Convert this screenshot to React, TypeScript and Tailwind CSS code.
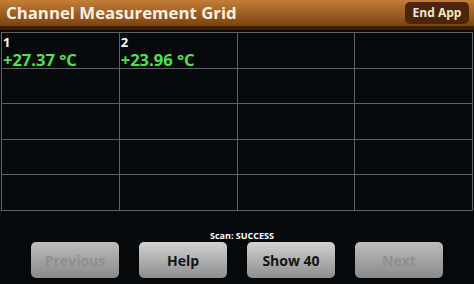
import React from "react";

const cells = Array.from({ length: 20 }, (_, i) => i);
const values: Record<number, string> = { 0: "+27.37 °C", 1: "+23.96 °C" };

function Btn({ label, disabled }: { label: string; disabled?: boolean }) {
  return (
    <button
      className={
        disabled
          ? "w-[88px] h-[36px] rounded-[5px] bg-gradient-to-b from-[#bdbdbd] to-[#8a8a8a] text-[14px] font-bold text-[#8f8f8f]"
          : "w-[88px] h-[36px] rounded-[5px] bg-gradient-to-b from-[#d2d2d2] to-[#8e8e8e] text-[14px] font-bold text-[#141414]"
      }
    >
      {label}
    </button>
  );
}

export default function App() {
  return (
    <div className="w-[474px] h-[284px] bg-[#05090c] flex flex-col font-['Open_Sans',sans-serif] overflow-hidden">
      {/* Header */}
      <div className="h-[30px] flex items-start justify-between bg-gradient-to-b from-[#c47e36] to-[#7a4313] border-b-[4px] border-[#3a1f08]">
        <div className="pl-[6px] pt-[1px] text-[16.8px] font-bold text-[#f7efe4] leading-[24px]">Channel Measurement Grid</div>
        <div className="mt-[2px] mr-[5px] w-[64px] h-[22px] rounded-[5px] bg-[#4a260b] text-[12px] font-bold text-[#f3e6cf] flex items-center justify-center">
          End App
        </div>
      </div>

      {/* Grid */}
      <div className="mt-[2px] mx-[1px] grid grid-cols-4 grid-rows-5 h-[179px] border-t border-l border-[#5d6266]">
        {cells.map((i) => (
          <div key={i} className="border-r border-b border-[#5d6266] pl-[1px] pt-[1px]">
            {values[i] && (
              <>
                <div className="text-[13px] font-bold text-white leading-[16px]">{i + 1}</div>
                <div className="text-[16.5px] font-bold text-[#4ee24e] leading-[19px]">{values[i]}</div>
              </>
            )}
          </div>
        ))}
      </div>

      {/* Footer */}
      <div className="mt-[19px] text-center text-[9px] font-bold text-white leading-[11px] pl-[10px]">Scan: SUCCESS</div>
      <div className="mt-[1px] flex justify-center gap-[20px]">
        <Btn label="Previous" disabled />
        <Btn label="Help" />
        <Btn label="Show 40" />
        <Btn label="Next" disabled />
      </div>
    </div>
  );
}
